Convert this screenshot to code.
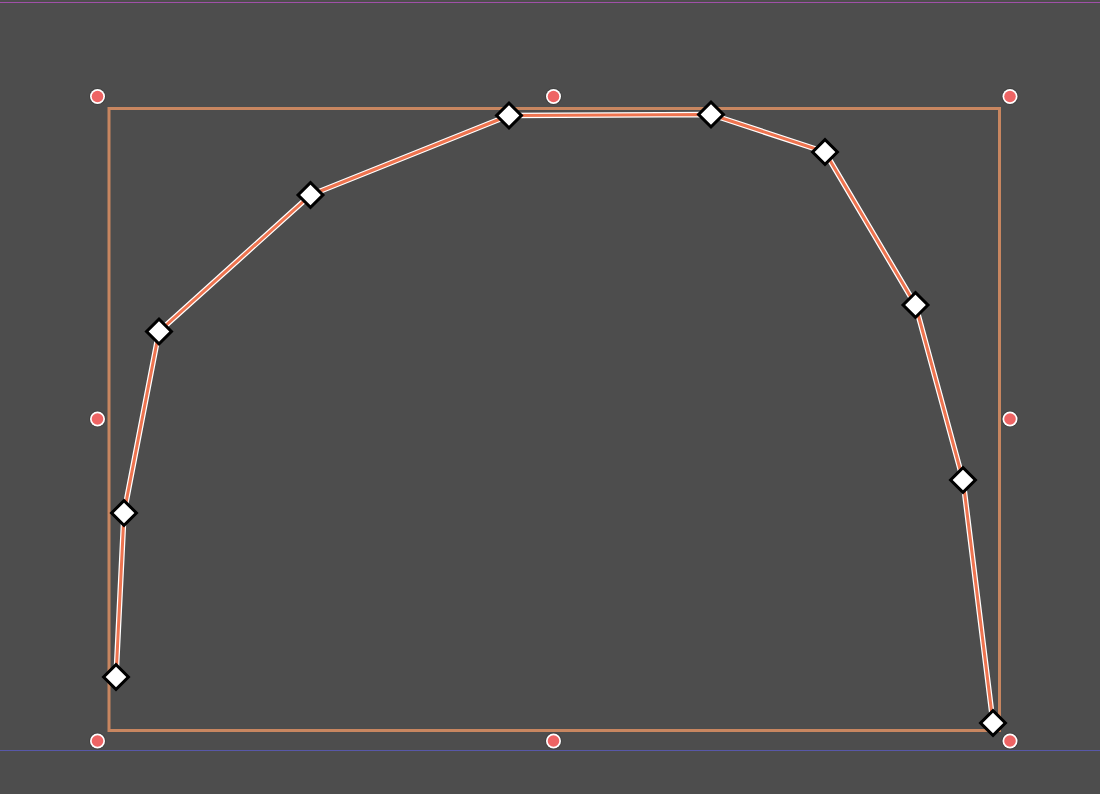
import React from "react";

const pts: [number, number][] = [
  [116, 677],
  [124, 513],
  [159, 331.5],
  [310.5, 195],
  [509, 115.5],
  [711, 114.5],
  [825, 152],
  [915.5, 305],
  [963, 480],
  [993, 723],
];

const handles: [number, number][] = [
  [97.5, 96.5],
  [553.5, 96.5],
  [1010, 96.5],
  [97.5, 419],
  [1010, 419],
  [97.5, 741],
  [553.5, 741],
  [1010, 741],
];

export default function App() {
  const poly = pts.map((p) => p.join(",")).join(" ");
  return (
    <div className="w-[1100px] h-[794px] bg-[#4d4d4d] overflow-hidden">
      <svg width="1100" height="794" viewBox="0 0 1100 794" className="block">
        <line x1="0" y1="2.5" x2="1100" y2="2.5" stroke="#a050a8" strokeWidth="1" />
        <line x1="0" y1="750.5" x2="1100" y2="750.5" stroke="#5858a8" strokeWidth="1" />
        <rect x="109" y="108.5" width="890.5" height="622" fill="none" stroke="#c88660" strokeWidth="3" />
        <polyline points={poly} fill="none" stroke="#ffffff" strokeWidth="5.5" strokeLinejoin="round" />
        <polyline points={poly} fill="none" stroke="#ee7450" strokeWidth="3" strokeLinejoin="round" />
        {pts.map(([x, y], i) => (
          <rect
            key={i}
            x={x - 8.8}
            y={y - 8.8}
            width="17.6"
            height="17.6"
            transform={`rotate(45 ${x} ${y})`}
            fill="#ffffff"
            stroke="#000000"
            strokeWidth="3"
          />
        ))}
        {handles.map(([x, y], i) => (
          <g key={i}>
            <circle cx={x} cy={y} r="8.5" fill="#3a3a3a" opacity="0.6" />
            <circle cx={x} cy={y} r="7.5" fill="#ffffff" />
            <circle cx={x} cy={y} r="5.8" fill="#ee6464" />
          </g>
        ))}
      </svg>
    </div>
  );
}
